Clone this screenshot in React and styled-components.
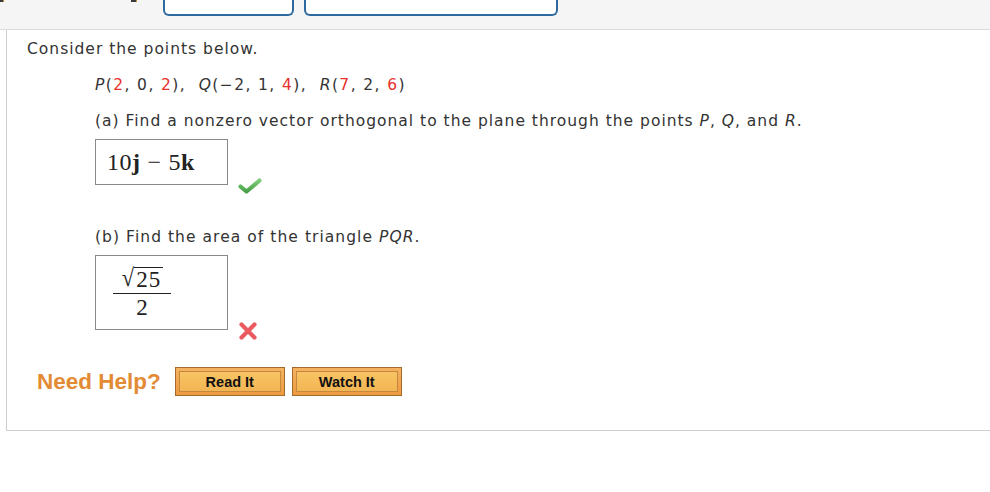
import React from "react";
import styled, { createGlobalStyle } from "styled-components";

const Global = createGlobalStyle`
  html, body { margin: 0; padding: 0; background: #fff; }
  body { font-family: "DejaVu Sans", Verdana, sans-serif; color: #333; }
`;

const TopBar = styled.div`
  height: 29px;
  background: #f5f5f5;
  border-bottom: 1px solid #dcdcdc;
  display: flex;
  align-items: flex-start;
`;

const Mark = styled.span`
  display: block;
  width: ${(p) => p.$w}px;
  height: 2px;
  margin-left: ${(p) => p.$ml}px;
  background: #3a3a3a;
  border-right: 1px solid #c98a3a;
`;

const TabBox = styled.div`
  width: ${(p) => p.$w}px;
  height: 14px;
  margin-left: ${(p) => p.$ml}px;
  border: 2px solid #2d6a9f;
  border-top: none;
  border-radius: 0 0 6px 6px;
  background: #fff;
`;

const Panel = styled.div`
  margin-left: 6px;
  height: 401px;
  border-left: 1px solid #cfcfcf;
  border-bottom: 1px solid #cfcfcf;
  padding: 9px 0 0 20px;
  box-sizing: border-box;
  background: #fff;
`;

const Text = styled.div`
  font-size: 15.5px;
  letter-spacing: ${(p) => p.$ls || 1}px;
  line-height: 20px;
  margin-left: ${(p) => p.$indent || 0}px;
  margin-top: ${(p) => p.$mt || 0}px;
  white-space: nowrap;
`;

const It = styled.i`
  font-style: oblique;
`;

const Red = styled.span`
  color: #e8302c;
`;

const AnswerRow = styled.div`
  display: flex;
  align-items: flex-end;
  margin-left: 68px;
  margin-top: ${(p) => p.$mt}px;
`;

const AnswerBox = styled.div`
  width: 133px;
  height: ${(p) => p.$h}px;
  box-sizing: border-box;
  border: 1px solid #8a8a8a;
  background: #fff;
  display: flex;
  align-items: center;
  padding-left: ${(p) => p.$pl}px;
  color: #222;
`;

const MathLine = styled.div`
  font-family: "Liberation Serif", serif;
  font-size: 24px;
  white-space: nowrap;
  letter-spacing: 0.5px;
`;

const Bold = styled.b`
  font-weight: bold;
`;

const Op = styled.span`
  margin: 0 7px;
`;

const Frac = styled.div`
  display: flex;
  flex-direction: column;
  align-items: center;
  font-family: "Liberation Serif", serif;
  font-size: 23px;
  width: 58px;
`;

const Num = styled.div`
  display: flex;
  align-items: flex-end;
  padding-bottom: 3px;
  line-height: 22px;
`;

const Radical = styled.span`
  font-size: 25px;
  line-height: 24px;
  transform: scaleX(0.9);
`;

const Radicand = styled.span`
  border-top: 1px solid #222;
  padding: 1px 2px 0;
  line-height: 21px;
  letter-spacing: 1px;
`;

const Bar = styled.div`
  width: 100%;
  border-top: 1px solid #222;
`;

const Den = styled.div`
  line-height: 24px;
  padding-top: 2px;
`;

const Icon = styled.div`
  margin-left: 10px;
  margin-bottom: ${(p) => p.$mb}px;
  display: flex;
`;

const HelpRow = styled.div`
  display: flex;
  align-items: center;
  margin-left: 10px;
  margin-top: 37px;
`;

const Help = styled.span`
  font-family: "Liberation Sans", Arial, sans-serif;
  font-weight: bold;
  font-size: 22.5px;
  color: #e38b34;
  margin-right: 14px;
`;

const HelpButton = styled.button`
  width: 110px;
  height: 29px;
  margin-right: 7px;
  padding: 3px;
  box-sizing: border-box;
  border: 1px solid #a26a2c;
  background: linear-gradient(#f4b260, #ee9a3e);
  cursor: pointer;
  display: flex;
`;

const ButtonInner = styled.span`
  flex: 1;
  border: 1px solid #c4883e;
  background: linear-gradient(#f7c464, #f3b553);
  font-family: "Liberation Sans", Arial, sans-serif;
  font-weight: bold;
  font-size: 14.5px;
  color: #111;
  display: flex;
  align-items: center;
  justify-content: center;
`;

const Check = () => (
  <svg width="24" height="16" viewBox="0 0 24 16">
    <defs>
      <linearGradient id="cg" x1="0" y1="0" x2="0" y2="1">
        <stop offset="0" stopColor="#7ccc78" />
        <stop offset="1" stopColor="#48a048" />
      </linearGradient>
    </defs>
    <path
      d="M2.5 8.5 L8.5 13.5 L21.5 2.5"
      fill="none"
      stroke="url(#cg)"
      strokeWidth="4.2"
      strokeLinecap="round"
      strokeLinejoin="round"
    />
  </svg>
);

const Cross = () => (
  <svg width="20" height="20" viewBox="0 0 20 20">
    <path
      d="M3.5 3.5 L16.5 16.5 M16.5 3.5 L3.5 16.5"
      fill="none"
      stroke="#ea5a5e"
      strokeWidth="4.2"
      strokeLinecap="round"
    />
  </svg>
);

export default function App() {
  return (
    <>
      <Global />
      <TopBar>
        <Mark $w={3} $ml={0} />
        <Mark $w={5} $ml={127} />
        <TabBox $w={127} $ml={26} />
        <TabBox $w={250} $ml={10} />
      </TopBar>
      <Panel>
        <Text>Consider the points below.</Text>
        <Text $indent={68} $mt={16} $ls={1.4}>
          <It>P</It>(<Red>2</Red>, 0, <Red>2</Red>),&nbsp; <It>Q</It>(−2, 1, <Red>4</Red>),&nbsp; <It>R</It>(
          <Red>7</Red>, 2, <Red>6</Red>)
        </Text>
        <Text $indent={68} $mt={16}>
          (a) Find a nonzero vector orthogonal to the plane through the points <It>P</It>, <It>Q</It>, and{" "}
          <It>R</It>.
        </Text>
        <AnswerRow $mt={8}>
          <AnswerBox $h={46} $pl={11}>
            <MathLine>
              10<Bold>j</Bold>
              <Op>−</Op>5<Bold>k</Bold>
            </MathLine>
          </AnswerBox>
          <Icon $mb={-9}>
            <Check />
          </Icon>
        </AnswerRow>
        <Text $mt={42} $indent={68} $ls={1.05}>
          (b) Find the area of the triangle <It>PQR</It>.
        </Text>
        <AnswerRow $mt={8}>
          <AnswerBox $h={75} $pl={17}>
            <Frac>
              <Num>
                <Radical>√</Radical>
                <Radicand>25</Radicand>
              </Num>
              <Bar />
              <Den>2</Den>
            </Frac>
          </AnswerBox>
          <Icon $mb={-11}>
            <Cross />
          </Icon>
        </AnswerRow>
        <HelpRow>
          <Help>Need Help?</Help>
          <HelpButton>
            <ButtonInner>Read It</ButtonInner>
          </HelpButton>
          <HelpButton>
            <ButtonInner>Watch It</ButtonInner>
          </HelpButton>
        </HelpRow>
      </Panel>
    </>
  );
}
